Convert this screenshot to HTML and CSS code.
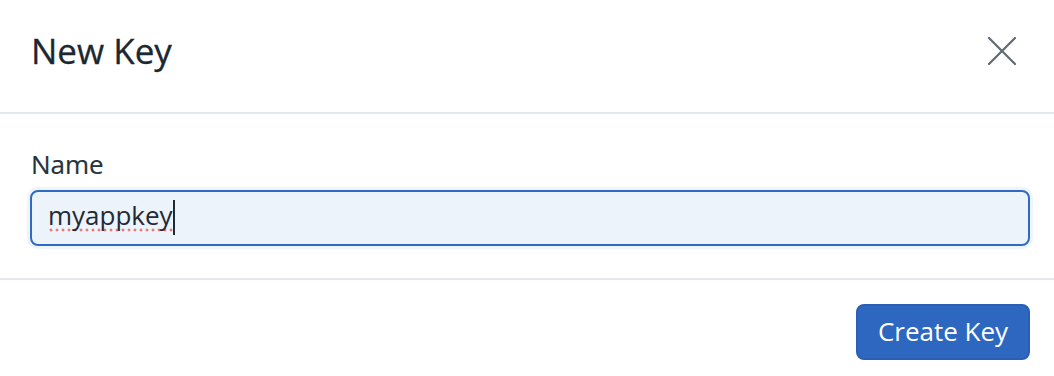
FILE: index.html
```html
<!DOCTYPE html>
<html lang="en">
<head>
    <meta charset="UTF-8">
    <meta name="viewport" content="width=device-width, initial-scale=1.0">
    <title>New Key</title>
    <link rel="stylesheet" href="styles.css">
</head>
<body>

    <div class="modal">
        <div class="modal-header">
            <h2 class="modal-title">New Key</h2>
            <button class="close-btn" aria-label="Close">
                <svg width="28" height="28" viewBox="0 0 28 28">
                    <path d="M1 1 L27 27 M27 1 L1 27" stroke="#5f6a74" stroke-width="2.2" stroke-linecap="round" fill="none"/>
                </svg>
            </button>
        </div>

        <div class="modal-body">
            <label class="label" for="keyname">Name</label>
            <div class="input-field" id="keyname">
                <span class="typed">myappkey</span><span class="caret"></span>
            </div>
        </div>

        <div class="modal-footer">
            <button class="button">Create Key</button>
        </div>
    </div>

</body>
</html>
```

FILE: styles.css
```css
body {
    margin: 0;
    padding: 0;
    background: #fff;
    font-family: "Open Sans", "Noto Sans", sans-serif;
    color: #1f2a34;
}
.modal {
    width: 1054px;
}
.modal-header {
    display: flex;
    justify-content: space-between;
    align-items: flex-start;
    padding: 29px 38px 39px 30px;
    border-bottom: 2px solid #e3e7eb;
}
.modal-title {
    margin: 0;
    font-size: 35px;
    font-weight: 400;
    line-height: 44px;
    color: #1c2731;
    padding-left: 1px;
    -webkit-text-stroke: 0.3px #1c2731;
}
.close-btn {
    display: flex;
    align-items: center;
    justify-content: center;
    width: 28px;
    height: 44px;
    padding: 0;
    border: none;
    background: none;
    cursor: pointer;
}
.modal-body {
    padding: 34px 24px 32px 30px;
    border-bottom: 2px solid #e3e7eb;
}
.label {
    display: block;
    font-size: 26px;
    line-height: 32px;
    color: #26323c;
    margin-bottom: 10px;
    padding-left: 1px;
    -webkit-text-stroke: 0.2px #26323c;
}
.input-field {
    display: flex;
    align-items: flex-start;
    box-sizing: border-box;
    height: 56px;
    padding: 6px 16px 0;
    border: 2px solid #2f6bc2;
    border-radius: 8px;
    background: #edf3fb;
    box-shadow: 0 0 0 3px rgba(47, 107, 194, 0.08);
    font-size: 26px;
    color: #1f2a34;
}
.typed {
    display: inline-block;
    line-height: 30px;
    padding-bottom: 2px;
    margin-top: 2px;
    background-image: radial-gradient(circle, #ea7a72 1.3px, transparent 1.7px);
    background-size: 6px 4px;
    background-repeat: repeat-x;
    background-position: 0 100%;
}
.caret {
    display: inline-block;
    width: 2px;
    height: 35px;
    margin-top: 2px;
    background: #1f2a34;
}
.modal-footer {
    display: flex;
    justify-content: flex-end;
    padding: 24px 24px 16px;
}
.button {
    width: 174px;
    height: 56px;
    padding: 0 0 3px;
    background: #2d67c0;
    border: 2px solid #2a5fb5;
    border-radius: 8px;
    color: #fff;
    font-family: "Open Sans", "Noto Sans", sans-serif;
    font-size: 26px;
    cursor: pointer;
}
```
